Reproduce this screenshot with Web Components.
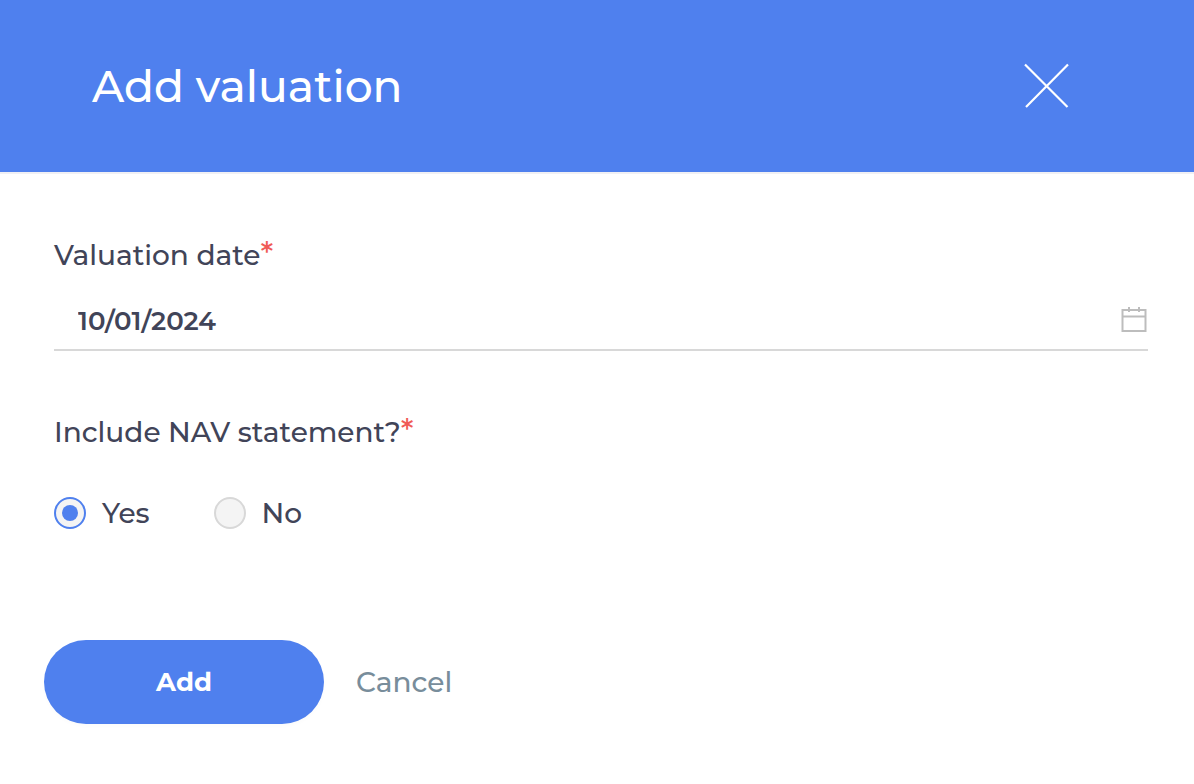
<!DOCTYPE html>
<html lang="en">
<head>
  <meta charset="utf-8">
  <meta name="viewport" content="width=device-width, initial-scale=1">
  <title>Add valuation</title>
  <style>
    body {
      --primary: #4f80ee;
      --text: #414458;
      --muted: #788d9b;
      --line: #d8d8d8;
      --danger: #f05b56;
      margin: 0;
      background: #fff;
      color: var(--text);
      font-family: Montserrat, Inter, sans-serif;
      font-size: 28px;
      font-weight: 500;
      line-height: 36px;
    }
  </style>
</head>
<body>
  <valuation-dialog></valuation-dialog>

  <script>
    class DialogHeader extends HTMLElement {
      shadowRoot = this.attachShadow({ mode: 'open' });

      connectedCallback() {
        this.shadowRoot.innerHTML = `
          ${this.getStyles()}
          <h1><slot></slot></h1>
          <button type="button" aria-label="Close">
            <svg width="46" height="46" viewBox="0 0 46 46" fill="none" stroke="currentColor" stroke-width="2.2">
              <path d="M1 1.5 43.5 44M44 1.5 2 44" />
            </svg>
          </button>
        `;
        this.shadowRoot.querySelector('button').addEventListener('click', () => {
          this.dispatchEvent(new CustomEvent('dialog-close', { bubbles: true, composed: true }));
        });
      }

      getStyles() {
        return `
          <style>
            :host {
              display: flex;
              align-items: center;
              justify-content: space-between;
              min-height: 172px;
              padding: 0 124px 0 92px;
              border-bottom: 2px solid #f0f0f4;
              background: var(--primary);
              background-clip: padding-box;
              color: #fff;
            }

            h1 {
              margin: 0;
              font-size: 44px;
              font-weight: 500;
              line-height: 56px;
            }

            button {
              display: flex;
              padding: 0;
              border: 0;
              background: none;
              color: inherit;
              cursor: pointer;
            }
          </style>
        `;
      }
    }

    class DateField extends HTMLElement {
      shadowRoot = this.attachShadow({ mode: 'open' });

      connectedCallback() {
        this.shadowRoot.innerHTML = `
          ${this.getStyles()}
          <label for="date"><slot></slot><span class="required">*</span></label>
          <div class="control">
            <input id="date" type="text" inputmode="numeric" required>
            <button type="button" aria-label="Open calendar">
              <svg width="28" height="28" viewBox="0 0 28 28" fill="none" stroke="currentColor" stroke-width="2">
                <path d="M2.5 3h23v21h-23zM2.5 9.5h23M9 0v5M19 0v5" />
              </svg>
            </button>
          </div>
        `;
        this.shadowRoot.querySelector('input').value = this.getAttribute('value') || '';
      }

      getStyles() {
        return `
          <style>
            :host {
              display: grid;
              gap: 19px;
            }

            .required {
              color: var(--danger);
              font-size: 32px;
              line-height: 0;
            }

            .control {
              display: flex;
              align-items: center;
              height: 57px;
              border-bottom: 2px solid var(--line);
            }

            input {
              flex: 1;
              min-width: 0;
              padding: 0 24px;
              border: 0;
              outline: 0;
              background: none;
              color: inherit;
              font: inherit;
              font-size: 26px;
              font-weight: 600;
            }

            button {
              display: flex;
              padding: 0;
              border: 0;
              background: none;
              color: #bdbdbd;
              cursor: pointer;
            }
          </style>
        `;
      }
    }

    class YesNoField extends HTMLElement {
      shadowRoot = this.attachShadow({ mode: 'open' });

      connectedCallback() {
        this.shadowRoot.innerHTML = `
          ${this.getStyles()}
          <fieldset>
            <legend><slot></slot><span class="required">*</span></legend>
            <div class="options">
              <label><input type="radio" name="answer" value="yes" checked>Yes</label>
              <label><input type="radio" name="answer" value="no">No</label>
            </div>
          </fieldset>
        `;
      }

      getStyles() {
        return `
          <style>
            :host {
              display: block;
            }

            fieldset {
              min-width: 0;
              margin: 0;
              padding: 0;
              border: 0;
            }

            legend {
              padding: 0;
            }

            .required {
              color: var(--danger);
              font-size: 32px;
              line-height: 0;
            }

            .options {
              display: flex;
              gap: 64px;
              padding-top: 45px;
            }

            label {
              display: flex;
              align-items: center;
              gap: 16px;
              cursor: pointer;
            }

            input {
              appearance: none;
              display: grid;
              place-items: center;
              box-sizing: border-box;
              width: 32px;
              height: 32px;
              margin: 0;
              border: 2px solid var(--line);
              border-radius: 50%;
              background: #f4f4f4;
            }

            input:checked {
              border-color: var(--primary);
            }

            input:checked::before {
              content: '';
              width: 16px;
              height: 16px;
              border-radius: 50%;
              background: var(--primary);
            }
          </style>
        `;
      }
    }

    class ActionButton extends HTMLElement {
      shadowRoot = this.attachShadow({ mode: 'open' });

      connectedCallback() {
        this.shadowRoot.innerHTML = `
          ${this.getStyles()}
          <button type="button"><slot></slot></button>
        `;
      }

      getStyles() {
        return `
          <style>
            :host {
              display: block;
            }

            button {
              padding: 0;
              border: 0;
              background: none;
              color: var(--muted);
              font: inherit;
              cursor: pointer;
            }

            :host([primary]) button {
              min-width: 280px;
              height: 84px;
              border-radius: 42px;
              background: var(--primary);
              box-shadow: 0 2px 4px rgba(0, 0, 0, 0.02);
              color: #fff;
              font-size: 26px;
              font-weight: 700;
            }
          </style>
        `;
      }
    }

    class ValuationDialog extends HTMLElement {
      shadowRoot = this.attachShadow({ mode: 'open' });

      connectedCallback() {
        this.shadowRoot.innerHTML = `
          ${this.getStyles()}
          <dialog-header>Add valuation</dialog-header>
          <main>
            <div class="fields">
              <date-field value="10/01/2024">Valuation date</date-field>
              <yes-no-field>Include NAV statement?</yes-no-field>
            </div>
            <div class="actions">
              <action-button primary>Add</action-button>
              <action-button>Cancel</action-button>
            </div>
          </main>
        `;
        this.addEventListener('dialog-close', () => this.remove());
      }

      getStyles() {
        return `
          <style>
            :host {
              display: block;
            }

            main {
              padding: 63px 36px 60px 44px;
            }

            .fields {
              display: grid;
              gap: 63px;
              padding: 0 10px;
            }

            .actions {
              display: flex;
              align-items: center;
              gap: 32px;
              margin-top: 109px;
            }
          </style>
        `;
      }
    }

    customElements.define('dialog-header', DialogHeader);
    customElements.define('date-field', DateField);
    customElements.define('yes-no-field', YesNoField);
    customElements.define('action-button', ActionButton);
    customElements.define('valuation-dialog', ValuationDialog);
  </script>
</body>
</html>
